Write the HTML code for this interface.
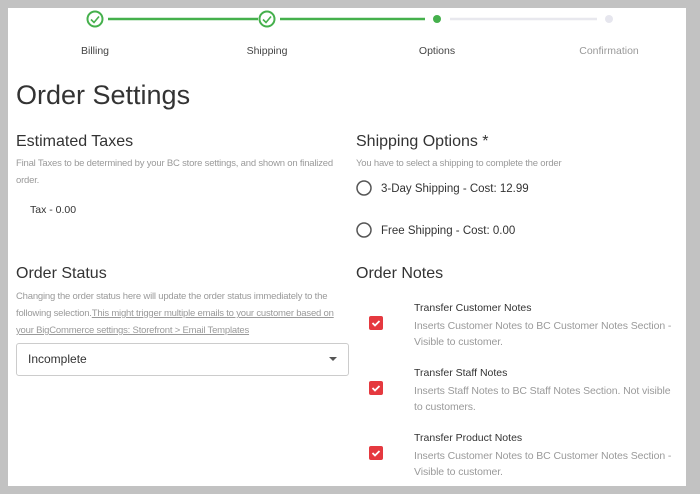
<!DOCTYPE html>
<html><head><style>
body{margin:0;width:700px;height:494px;background:#c2c2c2;font-family:"Liberation Sans",sans-serif;position:relative;overflow:hidden}
.p{position:absolute;left:8px;top:8px;width:678px;height:478px;background:#fff}
.a{position:absolute;white-space:nowrap}
.s{font-size:9.5px;color:#9a9a9a;line-height:17px;letter-spacing:-0.2px}
.h{font-size:16px;color:#333}
.cb{position:absolute;width:14px;height:14px;background:#e5393f;border-radius:2px}
.t{font-size:10.5px;color:#333}
.d{font-size:10.5px;color:#9a9a9a;line-height:16px;letter-spacing:-0.1px}
</style></head><body>
<div class="p"></div>
<svg class="a" style="left:0;top:0" width="700" height="40">
<line x1="108" y1="19" x2="258" y2="19" stroke="#45b04c" stroke-width="2.5"/>
<line x1="280" y1="19" x2="425" y2="19" stroke="#45b04c" stroke-width="2.5"/>
<line x1="450" y1="19" x2="597" y2="19" stroke="#e8e8ee" stroke-width="2.5"/>
<circle cx="95" cy="19" r="7.5" fill="none" stroke="#45b04c" stroke-width="2"/>
<path d="M91 19.5l3 3 5-6" fill="none" stroke="#45b04c" stroke-width="1.6"/>
<circle cx="267" cy="19" r="7.5" fill="none" stroke="#45b04c" stroke-width="2"/>
<path d="M263 19.5l3 3 5-6" fill="none" stroke="#45b04c" stroke-width="1.6"/>
<circle cx="437" cy="19" r="4" fill="#45b04c"/>
<circle cx="609" cy="19" r="4" fill="#e6e6ee"/>
</svg>
<div class="a" style="left:55px;top:45px;width:80px;text-align:center;font-size:10.5px;color:#444">Billing</div>
<div class="a" style="left:227px;top:45px;width:80px;text-align:center;font-size:10.5px;color:#444">Shipping</div>
<div class="a" style="left:397px;top:45px;width:80px;text-align:center;font-size:10.5px;color:#444">Options</div>
<div class="a" style="left:569px;top:45px;width:80px;text-align:center;font-size:10.5px;color:#999">Confirmation</div>
<div class="a" style="left:16px;top:80px;font-size:27px;color:#333">Order Settings</div>
<div class="a h" style="left:16px;top:133px">Estimated Taxes</div>
<div class="a s" style="left:16px;top:155px">Final Taxes to be determined by your BC store settings, and shown on finalized<br>order.</div>
<div class="a" style="left:30px;top:204px;font-size:10.5px;color:#333">Tax - 0.00</div>
<div class="a h" style="left:356px;top:133px">Shipping Options *</div>
<div class="a s" style="left:356px;top:155px">You have to select a shipping to complete the order</div>
<svg class="a" style="left:355px;top:179px" width="20" height="60"><circle cx="9" cy="9" r="7" fill="none" stroke="#555" stroke-width="1.5"/><circle cx="9" cy="51" r="7" fill="none" stroke="#555" stroke-width="1.5"/></svg>
<div class="a" style="left:381px;top:183px;font-size:11.5px;color:#333">3-Day Shipping - Cost: 12.99</div>
<div class="a" style="left:381px;top:225px;font-size:11.5px;color:#333">Free Shipping - Cost: 0.00</div>
<div class="a h" style="left:16px;top:265px">Order Status</div>
<div class="a s" style="left:16px;top:288px">Changing the order status here will update the order status immediately to the<br>following selection.<u>This might trigger multiple emails to your customer based on<br>your BigCommerce settings: Storefront &gt; Email Templates</u></div>
<div class="a" style="left:16px;top:343px;width:331px;height:31px;border:1px solid #ccc;border-radius:3px"></div>
<div class="a" style="left:28px;top:352px;font-size:12px;color:#333">Incomplete</div>
<div class="a" style="left:329px;top:357px;width:0;height:0;border-left:4px solid transparent;border-right:4px solid transparent;border-top:4px solid #555"></div>
<div class="a h" style="left:356px;top:265px">Order Notes</div>
<div class="cb" style="left:369px;top:316px"></div><div class="cb" style="left:369px;top:381px"></div><div class="cb" style="left:369px;top:446px"></div>
<svg class="a" style="left:369px;top:316px" width="14" height="144"><path d="M3.5 7l2.5 2.5 4.5-4.5M3.5 72l2.5 2.5 4.5-4.5M3.5 137l2.5 2.5 4.5-4.5" fill="none" stroke="#fff" stroke-width="1.8"/></svg>
<div class="a t" style="left:414px;top:302px">Transfer Customer Notes</div>
<div class="a d" style="left:414px;top:318px">Inserts Customer Notes to BC Customer Notes Section -<br>Visible to customer.</div>
<div class="a t" style="left:414px;top:367px">Transfer Staff Notes</div>
<div class="a d" style="left:414px;top:383px">Inserts Staff Notes to BC Staff Notes Section. Not visible<br>to customers.</div>
<div class="a t" style="left:414px;top:432px">Transfer Product Notes</div>
<div class="a d" style="left:414px;top:448px">Inserts Customer Notes to BC Customer Notes Section -<br>Visible to customer.</div>
</body></html>
